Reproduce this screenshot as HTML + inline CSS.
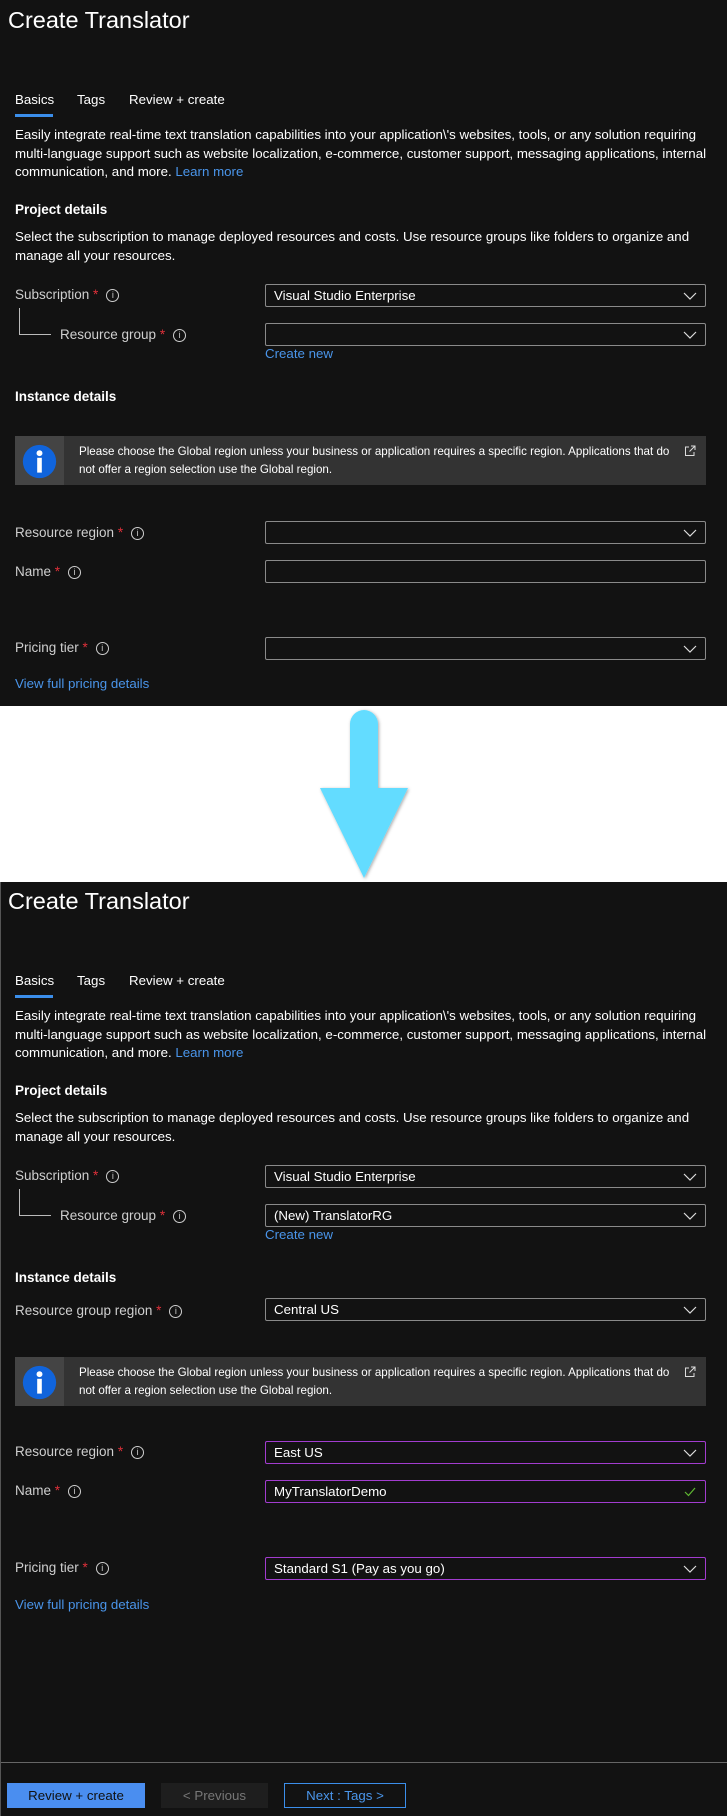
<!DOCTYPE html>
<html><head><meta charset="utf-8"><style>
*{margin:0;padding:0;box-sizing:border-box}
body{width:727px;height:1816px;background:#fff;font-family:"Liberation Sans",sans-serif;position:relative;overflow:hidden;color:#fff}
.panel{position:absolute;left:0;width:727px;background:#121212}
.a{position:absolute;white-space:nowrap}
.t{font-size:13.3px;line-height:18.5px}
.h1{font-size:23.5px}
.b{font-weight:bold;font-size:13.5px}
.lbl{color:#cfcfcf;font-size:13.5px}
.star{color:#e0303a}
.info{display:inline-block;width:13px;height:13px;border:1px solid #cfcfcf;border-radius:50%;font-size:9px;text-align:center;line-height:11px;color:#cfcfcf;margin-left:8px;vertical-align:1px}
.link{color:#4a95ea}
.box{position:absolute;left:265px;width:441px;height:23px;border:1px solid #8a8a8a;border-radius:2px;font-size:13.3px;padding-left:8px;line-height:21px}
.box.p{border-color:#a23ccf}
.chev{position:absolute;right:8px;top:4px}
.ibox{position:absolute;left:15px;width:691px;height:49px;background:#333}
.ibox .ic{position:absolute;left:0;top:0;width:49px;height:49px;background:#444}
.ibox .txt{position:absolute;left:64px;top:7px;font-size:11.6px;line-height:17.5px;color:#fff}
.tabline{position:absolute;left:15px;width:38px;height:3px;background:#3b8eea}
</style></head><body>
<svg width="0" height="0" style="position:absolute"><defs>
<symbol id="ch" viewBox="0 0 14 14"><path d="M1 4 L7 10 L13 4" fill="none" stroke="#ddd" stroke-width="1.2"/></symbol>
<symbol id="ib" viewBox="0 0 40 40"><circle cx="20" cy="20" r="18" fill="#1064dc"/><circle cx="20" cy="11" r="3.2" fill="#fff"/><rect x="17.5" y="16" width="5" height="16" fill="#fff"/></symbol>
<symbol id="ex" viewBox="0 0 12 12"><path d="M5 2H1.5V10.5H10V7M7 1H11V5M11 1L5.5 6.5" fill="none" stroke="#ddd" stroke-width="1"/></symbol>
</defs></svg>

<!-- PANEL 1 -->
<div class="panel" style="top:0;height:706px">
<div class="a h1" style="left:8px;top:7px">Create Translator</div>
<div class="a t" style="left:15px;top:91px">Basics</div>
<div class="a t" style="left:77px;top:91px">Tags</div>
<div class="a t" style="left:129px;top:91px">Review + create</div>
<div class="tabline" style="top:114px"></div>
<div class="a t" style="left:15px;top:126px">Easily integrate real-time text translation capabilities into your application\'s websites, tools, or any solution requiring<br>multi-language support such as website localization, e-commerce, customer support, messaging applications, internal<br>communication, and more. <span class="link">Learn more</span></div>
<div class="a b" style="left:15px;top:202px">Project details</div>
<div class="a t" style="left:15px;top:228px">Select the subscription to manage deployed resources and costs. Use resource groups like folders to organize and<br>manage all your resources.</div>
<div class="a lbl" style="left:15px;top:287px">Subscription <span class="star">*</span><span class="info">i</span></div>
<div class="box" style="top:284px">Visual Studio Enterprise<svg class="chev" width="14" height="14"><use href="#ch"/></svg></div>
<div class="a" style="left:19px;top:308px;width:32px;height:27px;border-left:1px solid #bbb;border-bottom:1px solid #bbb"></div>
<div class="a lbl" style="left:60px;top:327px">Resource group <span class="star">*</span><span class="info">i</span></div>
<div class="box" style="top:323px"><svg class="chev" width="14" height="14"><use href="#ch"/></svg></div>
<div class="a t link" style="left:265px;top:345px">Create new</div>
<div class="a b" style="left:15px;top:389px">Instance details</div>
<div class="ibox" style="top:436px"><div class="ic"><svg style="position:absolute;left:6px;top:7px" width="37" height="37"><use href="#ib"/></svg></div>
<div class="txt">Please choose the Global region unless your business or application requires a specific region. Applications that do<br>not offer a region selection use the Global region.</div>
<svg style="position:absolute;right:10px;top:9px" width="12" height="12"><use href="#ex"/></svg></div>
<div class="a lbl" style="left:15px;top:525px">Resource region <span class="star">*</span><span class="info">i</span></div>
<div class="box" style="top:521px"><svg class="chev" width="14" height="14"><use href="#ch"/></svg></div>
<div class="a lbl" style="left:15px;top:564px">Name <span class="star">*</span><span class="info">i</span></div>
<div class="box" style="top:560px"></div>
<div class="a lbl" style="left:15px;top:640px">Pricing tier <span class="star">*</span><span class="info">i</span></div>
<div class="box" style="top:637px"><svg class="chev" width="14" height="14"><use href="#ch"/></svg></div>
<div class="a t link" style="left:15px;top:675px">View full pricing details</div>
</div>

<!-- ARROW -->
<svg class="a" style="left:300px;top:706px" width="130" height="180">
<defs><filter id="sh"><feDropShadow dx="1" dy="1" stdDeviation="1.5" flood-color="#000" flood-opacity=".35"/></filter></defs>
<path d="M50 18 A14 14 0 0 1 78 18 V82 H108 L64 172 L20 82 H50 Z" fill="#63dcff" filter="url(#sh)"/>
</svg>

<!-- PANEL 2 -->
<div class="panel" style="top:882px;height:934px;border-left:1px solid #555">
<div class="a h1" style="left:7px;top:6px">Create Translator</div>
<div class="a t" style="left:14px;top:90px">Basics</div>
<div class="a t" style="left:76px;top:90px">Tags</div>
<div class="a t" style="left:128px;top:90px">Review + create</div>
<div class="tabline" style="top:113px;left:14px"></div>
<div class="a t" style="left:14px;top:125px">Easily integrate real-time text translation capabilities into your application\'s websites, tools, or any solution requiring<br>multi-language support such as website localization, e-commerce, customer support, messaging applications, internal<br>communication, and more. <span class="link">Learn more</span></div>
<div class="a b" style="left:14px;top:201px">Project details</div>
<div class="a t" style="left:14px;top:227px">Select the subscription to manage deployed resources and costs. Use resource groups like folders to organize and<br>manage all your resources.</div>
<div class="a lbl" style="left:14px;top:286px">Subscription <span class="star">*</span><span class="info">i</span></div>
<div class="box" style="top:283px;left:264px">Visual Studio Enterprise<svg class="chev" width="14" height="14"><use href="#ch"/></svg></div>
<div class="a" style="left:18px;top:307px;width:32px;height:27px;border-left:1px solid #bbb;border-bottom:1px solid #bbb"></div>
<div class="a lbl" style="left:59px;top:326px">Resource group <span class="star">*</span><span class="info">i</span></div>
<div class="box" style="top:322px;left:264px">(New) TranslatorRG<svg class="chev" width="14" height="14"><use href="#ch"/></svg></div>
<div class="a t link" style="left:264px;top:344px">Create new</div>
<div class="a b" style="left:14px;top:388px">Instance details</div>
<div class="a lbl" style="left:14px;top:421px">Resource group region <span class="star">*</span><span class="info">i</span></div>
<div class="box" style="top:416px;left:264px">Central US<svg class="chev" width="14" height="14"><use href="#ch"/></svg></div>
<div class="ibox" style="top:475px;left:14px"><div class="ic"><svg style="position:absolute;left:6px;top:7px" width="37" height="37"><use href="#ib"/></svg></div>
<div class="txt">Please choose the Global region unless your business or application requires a specific region. Applications that do<br>not offer a region selection use the Global region.</div>
<svg style="position:absolute;right:10px;top:9px" width="12" height="12"><use href="#ex"/></svg></div>
<div class="a lbl" style="left:14px;top:562px">Resource region <span class="star">*</span><span class="info">i</span></div>
<div class="box p" style="top:559px;left:264px">East US<svg class="chev" width="14" height="14"><use href="#ch"/></svg></div>
<div class="a lbl" style="left:14px;top:601px">Name <span class="star">*</span><span class="info">i</span></div>
<div class="box p" style="top:598px;left:264px">MyTranslatorDemo<svg class="chev" width="14" height="14" viewBox="0 0 14 14"><path d="M2 7 L5.5 10.5 L12 3" fill="none" stroke="#5fb832" stroke-width="1.2"/></svg></div>
<div class="a lbl" style="left:14px;top:678px">Pricing tier <span class="star">*</span><span class="info">i</span></div>
<div class="box p" style="top:675px;left:264px">Standard S1 (Pay as you go)<svg class="chev" width="14" height="14"><use href="#ch"/></svg></div>
<div class="a t link" style="left:14px;top:714px">View full pricing details</div>
<div class="a" style="left:0;top:880px;width:727px;height:1px;background:#666"></div>
<div class="a" style="left:6px;top:901px;width:138px;height:25px;background:#4a8ef0;color:#111;font-size:13.3px;text-align:center;line-height:25px">Review + create</div>
<div class="a" style="left:160px;top:901px;width:107px;height:25px;background:#1e1e1e;color:#777;font-size:13.3px;text-align:center;line-height:25px">&lt; Previous</div>
<div class="a" style="left:283px;top:901px;width:122px;height:25px;border:1px solid #3b8eea;color:#4a95ea;font-size:13.3px;text-align:center;line-height:23px">Next : Tags &gt;</div>
</div>
</body></html>
